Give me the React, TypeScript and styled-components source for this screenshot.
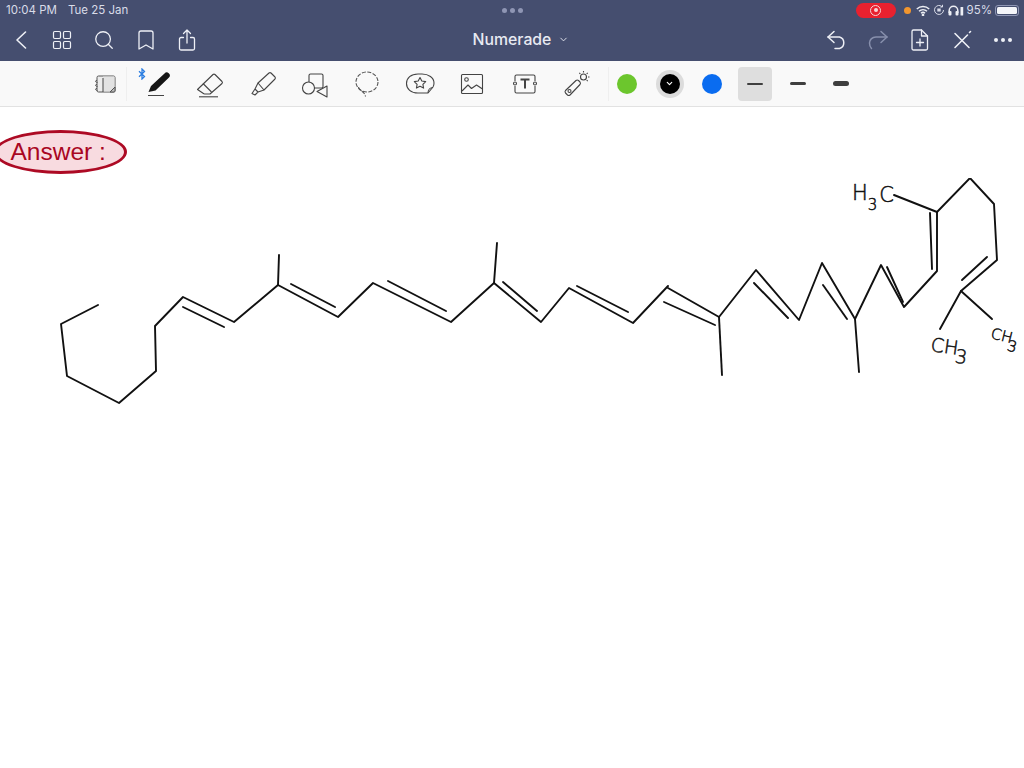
import styled, { createGlobalStyle } from 'styled-components';
import { ChevronDown, Search, Bookmark } from 'lucide-react';

const GlobalStyle = createGlobalStyle`
  html, body {
    margin: 0;
    padding: 0;
    background: #fff;
    font-family: "Inter", "Liberation Sans", sans-serif;
  }
`;

const Page = styled.div`
  width: 1024px;
  height: 768px;
  overflow: hidden;
  display: flex;
  flex-direction: column;
  background: #fff;
`;

const Header = styled.header`
  background: #454e6f;
  color: #eef0f6;
  height: 61px;
  flex: none;
`;

const StatusBar = styled.div`
  height: 20px;
  display: grid;
  grid-template-columns: 1fr auto 1fr;
  align-items: center;
  padding: 0 5px 0 6px;
  font-size: 11.5px;
  color: #d9dce8;
`;

const StatusLeft = styled.div`
  display: flex;
  gap: 11px;
`;

const StatusRight = styled.div`
  display: flex;
  align-items: center;
  justify-content: flex-end;
  gap: 3px;
`;

const Dots = styled.div`
  display: flex;
  gap: 3px;
`;

const Dot = styled.span`
  width: 5px;
  height: 5px;
  border-radius: 50%;
  background: #8f96b4;
`;

const RecordPill = styled.div`
  width: 40px;
  height: 15px;
  margin-right: 5px;
  border-radius: 8px;
  background: #e8212f;
  display: flex;
  align-items: center;
  justify-content: center;
`;

const RecordRing = styled.span`
  width: 11px;
  height: 11px;
  box-sizing: border-box;
  border: 1.5px solid #f6d6d8;
  border-radius: 50%;
  display: flex;
  align-items: center;
  justify-content: center;
  &::after {
    content: '';
    width: 4px;
    height: 4px;
    border-radius: 50%;
    background: #f6d6d8;
  }
`;

const OrangeDot = styled.span`
  width: 7px;
  height: 7px;
  margin-right: 2px;
  border-radius: 50%;
  background: #f2962e;
`;

const Battery = styled.div`
  width: 24px;
  height: 11px;
  box-sizing: border-box;
  border: 1px solid #8f96b4;
  border-radius: 3px;
  padding: 1px;
  display: flex;
`;

const BatteryFill = styled.span`
  flex: 1;
  background: #f4f5f9;
  border-radius: 1.5px;
`;

const NavBar = styled.div`
  height: 40px;
  display: grid;
  grid-template-columns: 1fr auto 1fr;
  align-items: center;
`;

const NavGroup = styled.div<{ $end?: boolean }>`
  display: flex;
  align-items: center;
  justify-content: ${p => (p.$end ? 'flex-end' : 'flex-start')};
`;

const NavButton = styled.span<{ $muted?: boolean }>`
  width: 41.6px;
  height: 30px;
  display: flex;
  align-items: center;
  justify-content: center;
  color: ${p => (p.$muted ? '#8890ad' : '#eef0f6')};
`;

const Title = styled.div`
  display: flex;
  align-items: center;
  gap: 7px;
  font-size: 15.8px;
  font-weight: 500;
  margin: 0 0 2px 18px;
  color: #e8eaf2;
`;

const Toolbar = styled.div`
  height: 46px;
  flex: none;
  box-sizing: border-box;
  background: #f9f9f9;
  border-bottom: 1px solid #e2e2e2;
  display: flex;
  align-items: center;
  padding-left: 84px;
`;

const Tool = styled.span`
  width: 52.4px;
  height: 44px;
  flex: none;
  display: flex;
  align-items: center;
  justify-content: center;
  color: #3c3c3c;
`;

const PagesTool = styled(Tool)`
  width: 42px;
`;

const PenTool = styled(Tool)`
  position: relative;
  width: 57px;
  padding-left: 6px;
  box-sizing: border-box;
`;

const BluetoothMark = styled.svg`
  position: absolute;
  left: 11px;
  top: 6px;
`;

const Separator = styled.span<{ $gap?: number }>`
  width: 1px;
  height: 34px;
  flex: none;
  margin-left: ${p => p.$gap ?? 0}px;
  background: #efefef;
`;

const ToolGroup = styled.div`
  display: flex;
  align-items: center;
`;

const ColorGroup = styled.div`
  display: flex;
  align-items: center;
  margin-left: -3.5px;
`;

const ColorDot = styled.span<{ $color: string }>`
  width: 20px;
  height: 20px;
  border-radius: 50%;
  background: ${p => p.$color};
`;

const ColorSlot = styled.span`
  width: 42.6px;
  height: 44px;
  flex: none;
  display: flex;
  align-items: center;
  justify-content: center;
`;

const ActiveColor = styled.span`
  width: 20px;
  height: 20px;
  border-radius: 50%;
  background: #000;
  box-shadow: 0 0 0 4px #dcdcdc;
  color: #fff;
  display: flex;
  align-items: center;
  justify-content: center;
`;

const LineSlot = styled.span<{ $active?: boolean }>`
  width: 34px;
  height: 34px;
  margin: 0 4.5px;
  flex: none;
  border-radius: 4px;
  background: ${p => (p.$active ? '#dedede' : 'transparent')};
  display: flex;
  align-items: center;
  justify-content: center;
`;

const LineSample = styled.span<{ $weight: number }>`
  width: 16px;
  height: ${p => p.$weight}px;
  border-radius: ${p => p.$weight / 2}px;
  background: #3f3f3f;
`;

const Canvas = styled.main`
  flex: 1;
  background: #fff;
  padding-top: 23px;
`;

const AnswerBadge = styled.div`
  width: 133px;
  height: 44px;
  margin-left: -6px;
  box-sizing: border-box;
  border: 3.5px solid #ad0a24;
  border-radius: 50%;
  background: #f8dbe0;
  color: #a90622;
  font-family: "Liberation Sans", Arial, sans-serif;
  font-size: 24.5px;
  line-height: 38px;
  padding-left: 13.5px;
  white-space: nowrap;
`;

const Molecule = styled.svg`
  display: block;
  margin-top: 4px;
`;

const Hand = styled.text`
  font-family: "DejaVu Sans", sans-serif;
  font-weight: 200;
  fill: #111;
  stroke: #111;
  stroke-width: 0.5px;
`;

const BackIcon = () => (
  <svg width="12" height="18" viewBox="0 0 12 18" fill="none" stroke="currentColor" strokeWidth="1.6" strokeLinecap="round" strokeLinejoin="round">
    <path d="M10.500 1 2 9l8.500 8" />
  </svg>
);

const GridIcon = () => (
  <svg width="20" height="20" viewBox="0 0 20 20" fill="none" stroke="currentColor" strokeWidth="1.2">
    <rect x="1.500" y="1.500" width="7" height="7" rx="1.200" />
    <rect x="11.500" y="1.500" width="7" height="7" rx="1.200" />
    <rect x="1.500" y="11.500" width="7" height="7" rx="1.200" />
    <rect x="11.500" y="11.500" width="7" height="7" rx="1.200" />
  </svg>
);

const ShareIcon = () => (
  <svg width="20" height="24" viewBox="0 0 20 24" fill="none" stroke="currentColor" strokeWidth="1.300" strokeLinecap="round" strokeLinejoin="round">
    <path d="M6.500 9.500H4A1.500 1.500 0 0 0 2.500 11v9.500A1.500 1.500 0 0 0 4 22h12a1.500 1.500 0 0 0 1.500-1.500V11A1.500 1.500 0 0 0 16 9.500h-2.500" />
    <path d="M10 15V2M6.500 5.500 10 2l3.500 3.500" />
  </svg>
);

const UndoIcon = () => (
  <svg width="22" height="20" viewBox="0 0 22 20" fill="none" stroke="currentColor" strokeWidth="1.500" strokeLinecap="round" strokeLinejoin="round">
    <path d="M8 1.500 2 7l6 5.500" />
    <path d="M2 7h11.500a6 6 0 0 1 0 11.500H9" />
  </svg>
);

const RedoIcon = () => (
  <svg width="22" height="20" viewBox="0 0 22 20" fill="none" stroke="currentColor" strokeWidth="1.500" strokeLinecap="round" strokeLinejoin="round">
    <path d="M14 1.500 20 7l-6 5.500" />
    <path d="M20 7H9C5 7 2.500 10 2.500 13s1 4.500 2 5.500" />
  </svg>
);

const NewPageIcon = () => (
  <svg width="20" height="24" viewBox="0 0 20 24" fill="none" stroke="currentColor" strokeWidth="1.300" strokeLinecap="round" strokeLinejoin="round">
    <path d="M3.500 2h8l6 6v12.500a1.500 1.500 0 0 1-1.500 1.500H3.500A1.500 1.500 0 0 1 2 20.500v-17A1.500 1.500 0 0 1 3.500 2Z" />
    <path d="M11.500 2v6h6M10 11v7M6.500 14.500h7" />
  </svg>
);

const CrossToolsIcon = () => (
  <svg width="20" height="20" viewBox="0 0 20 20" fill="none" stroke="currentColor" strokeWidth="1.600" strokeLinecap="round">
    <path d="M3 3.500 17 17.500M15.500 5 3 17.500" />
    <path d="M17.500 2.500 18.500 1.500" />
  </svg>
);

const MoreIcon = () => (
  <svg width="20" height="6" viewBox="0 0 20 6" fill="currentColor">
    <circle cx="3" cy="3" r="2" />
    <circle cx="10" cy="3" r="2" />
    <circle cx="17" cy="3" r="2" />
  </svg>
);

const WifiIcon = () => (
  <svg width="14" height="11" viewBox="0 0 14 11" fill="none" stroke="#eceef4" strokeWidth="1.500">
    <path d="M.8 4a9 9 0 0 1 12.400 0M3 6.200a6 6 0 0 1 8 0M5 8.300a3 3 0 0 1 4 0" />
    <circle cx="7" cy="10" r=".6" fill="#eceef4" />
  </svg>
);

const LockRotationIcon = () => (
  <svg width="12" height="12" viewBox="0 0 12 12" fill="none" stroke="#d9dce8" strokeWidth="1">
    <path d="M10.500 6a4.500 4.500 0 1 1-1.400-3.300" />
    <path d="M9.500 .8v2.200H7.300" />
    <rect x="4.300" y="4.500" width="3.400" height="3" fill="#d9dce8" stroke="none" />
  </svg>
);

const HeadphonesIcon = () => (
  <svg width="16" height="12" viewBox="0 0 16 12" fill="none" stroke="#eceef4" strokeWidth="1.500">
    <path d="M1.200 9V6.500a4.300 4.300 0 0 1 8.600 0V9" />
    <rect x=".5" y="7" width="3" height="4.500" rx="1" fill="#eceef4" stroke="none" />
    <rect x="7.500" y="7" width="3" height="4.500" rx="1" fill="#eceef4" stroke="none" />
    <rect x="12.500" y="3" width="2.700" height="8.500" rx=".6" fill="#eceef4" stroke="none" />
  </svg>
);

const PagesIcon = () => (
  <svg width="24" height="24" viewBox="0 0 24 24" fill="none" stroke="#555" strokeWidth="1">
    <rect x="4" y="4" width="18" height="16" rx="1.500" fill="#ececec" />
    <rect x="10" y="4.500" width="11.500" height="15" fill="#e2e2e2" stroke="none" />
    <path d="M10 6v14" stroke="#444" />
    <path d="M4 8.500c-2-.5-2 2 .5 2M4 12.500c-2-.5-2 2 .5 2M4 16.500c-2-.5-2 2 .5 2" />
    <path d="M22 15l-5 5h4a1 1 0 0 0 1-1Z" fill="#bdbdbd" />
  </svg>
);

const PenIcon = () => (
  <svg width="26" height="26" viewBox="0 0 26 26">
    <path d="M2.500 21 5 15 18.500 2.500a3 3 0 0 1 4.500 4L9.500 19.500 2.500 21Z" fill="#161616" />
    <path d="M2 24.500h16" stroke="#444" strokeWidth="1" />
  </svg>
);

const EraserIcon = () => (
  <svg width="28" height="28" viewBox="0 0 28 28" fill="none" stroke="#444" strokeWidth="1.100" strokeLinejoin="round">
    <path d="M1.500 19.500 17 4.500a1.500 1.500 0 0 1 2 0l7 7a1.500 1.500 0 0 1 0 2L14 24H8.500a1 1 0 0 1-.7-.3L1.500 19.500Z" />
    <path d="M7 13.500 15.500 22" />
    <path d="M3 26.800h19" />
  </svg>
);

const HighlighterIcon = () => (
  <svg width="28" height="28" viewBox="0 0 28 28" fill="none" stroke="#444" strokeWidth="1.100" strokeLinejoin="round">
    <path d="M9 13 20 3a1.500 1.500 0 0 1 2 0l4 4a1.500 1.500 0 0 1 0 2L15 20Z" />
    <path d="M9 13 6 19l3 3 6-2M6 19l-3 4.500 3 1.500 3-3" />
  </svg>
);

const ShapesIcon = () => (
  <svg width="28" height="28" viewBox="0 0 28 28" fill="none" stroke="#444" strokeWidth="1.100" strokeLinejoin="round">
    <rect x="8" y="4" width="14" height="14" rx="1.500" />
    <circle cx="7.500" cy="18" r="6" fill="#f9f9f9" />
    <path d="M26 16v11l-10-5.500Z" fill="#f9f9f9" />
  </svg>
);

const LassoIcon = () => (
  <svg width="26" height="28" viewBox="0 0 26 28" fill="none" stroke="#555" strokeWidth="1.100" strokeDasharray="4 1.500">
    <ellipse cx="13" cy="12" rx="11" ry="10" />
    <path d="M4.500 17c.5 4 6 4 7 9.500" />
  </svg>
);

const StickerIcon = () => (
  <svg width="30" height="24" viewBox="0 0 30 24" fill="none" stroke="#444" strokeWidth="1.100" strokeLinejoin="round">
    <path d="M13 2h4c6.500 0 12 3.500 12 9 0 1.500-.3 3-1 4l-5 6H13C6 21 1.500 17 1.500 11.500S6 2 13 2Z" />
    <path d="M23 21c0-3 2-5.500 5-5.500" />
    <path d="m15 5.500 1.800 3.500 3.900.6-2.800 2.700.7 3.800-3.600-1.800-3.600 1.800.7-3.800-2.800-2.700 3.900-.6Z" />
  </svg>
);

const ImageIcon = () => (
  <svg width="24" height="22" viewBox="0 0 24 22" fill="none" stroke="#444" strokeWidth="1.100" strokeLinejoin="round">
    <rect x="1.500" y="1.500" width="21" height="19" rx="1" />
    <circle cx="6.500" cy="6.500" r="1.800" />
    <path d="m2 18 6-6 3.500 3.500 5-3.500 6 4" />
  </svg>
);

const TextBoxIcon = () => (
  <svg width="26" height="22" viewBox="0 0 26 22" fill="none" stroke="#444" strokeWidth="1.100">
    <path d="M3 8V3.500A1.500 1.500 0 0 1 4.500 2h17A1.500 1.500 0 0 1 23 3.500V8M3 13v5.500A1.500 1.500 0 0 0 4.500 20h17a1.500 1.500 0 0 0 1.500-1.500V13" />
    <circle cx="3" cy="10.500" r="1.500" />
    <circle cx="23" cy="10.500" r="1.500" />
    <path d="M8.500 6.500h9M13 6.500v9" strokeWidth="2" />
  </svg>
);

const LaserIcon = () => (
  <svg width="28" height="28" viewBox="0 0 28 28" fill="none" stroke="#444" strokeWidth="1.100" strokeLinejoin="round">
    <path d="M2.500 20.500 13 10.500a2 2 0 0 1 2.500 0l1.500 1.500a2 2 0 0 1 0 2.500L7 25a2 2 0 0 1-2.500 0L2.500 23a2 2 0 0 1 0-2.500Z" />
    <circle cx="6.500" cy="21" r="1.500" />
    <circle cx="20.500" cy="7" r="3" />
    <path d="M20.500 1v1.500M26.500 7H25M16.300 2.800l1 1M24.700 2.800l-1 1M24.700 11.200l-1-1" />
  </svg>
);

// bonds in page coordinates, read off the reference
const bonds = [
  'M98 305 61 324 67 376 119 403 156 371 155 326 183 297 234 322 278 285 338 317 373 283 451 322 494 283 541 322 569 288 633 323 668 286',
  'M183 307 224 327',
  'M291 284 335 307',
  'M279 255 278 285',
  'M388 281 446 311',
  'M497 243 494 283',
  'M503 282 537 311',
  'M577 286 628 312',
  'M668 288 719 317 756 270 799 320 822 263 855 319 881 265 904 307 937 271 937 212 970 178 994 204 997 260 961 291 940 329',
  'M664 302 715 325',
  'M719 317 722 375',
  'M754 283 788 318',
  'M823 285 847 319',
  'M855 319 859 372',
  'M887 267 903 302',
  'M932 269 930 213',
  'M894 195 937 212',
  'M962 280 987 257',
  'M961 291 992 319',
];

const tools = [EraserIcon, HighlighterIcon, ShapesIcon, LassoIcon, StickerIcon, ImageIcon, TextBoxIcon, LaserIcon];

export default function App() {
  return (
    <Page>
      <GlobalStyle />
      <Header>
        <StatusBar>
          <StatusLeft>
            <span>10:04 PM</span>
            <span>Tue 25 Jan</span>
          </StatusLeft>
          <Dots>
            <Dot />
            <Dot />
            <Dot />
          </Dots>
          <StatusRight>
            <RecordPill>
              <RecordRing />
            </RecordPill>
            <OrangeDot />
            <WifiIcon />
            <LockRotationIcon />
            <HeadphonesIcon />
            <span>95%</span>
            <Battery>
              <BatteryFill />
            </Battery>
          </StatusRight>
        </StatusBar>
        <NavBar>
          <NavGroup>
            <NavButton><BackIcon /></NavButton>
            <NavButton><GridIcon /></NavButton>
            <NavButton><Search size={22} strokeWidth={1.4} /></NavButton>
            <NavButton><Bookmark size={24} strokeWidth={1.3} /></NavButton>
            <NavButton><ShareIcon /></NavButton>
          </NavGroup>
          <Title>
            Numerade
            <ChevronDown size={11} strokeWidth={2} />
          </Title>
          <NavGroup $end>
            <NavButton><UndoIcon /></NavButton>
            <NavButton $muted><RedoIcon /></NavButton>
            <NavButton><NewPageIcon /></NavButton>
            <NavButton><CrossToolsIcon /></NavButton>
            <NavButton><MoreIcon /></NavButton>
          </NavGroup>
        </NavBar>
      </Header>
      <Toolbar>
        <PagesTool><PagesIcon /></PagesTool>
        <Separator />
        <ToolGroup>
          <PenTool>
            <BluetoothMark width="8" height="12" viewBox="0 0 8 12" fill="none" stroke="#2a7de1" strokeWidth="1.300">
              <path d="M1 3.200 6.500 8.500 4 11V1l2.500 2.500L1 8.800" />
            </BluetoothMark>
            <PenIcon />
          </PenTool>
          {tools.map((ToolIcon, i) => (
            <Tool key={i}><ToolIcon /></Tool>
          ))}
        </ToolGroup>
        <Separator $gap={5} />
        <ColorGroup>
          <ColorSlot><ColorDot $color="#6cc62d" /></ColorSlot>
          <ColorSlot>
            <ActiveColor><ChevronDown size={9} strokeWidth={3} /></ActiveColor>
          </ColorSlot>
          <ColorSlot><ColorDot $color="#0a6cf0" /></ColorSlot>
          <LineSlot $active><LineSample $weight={2} /></LineSlot>
          <LineSlot><LineSample $weight={3} /></LineSlot>
          <LineSlot><LineSample $weight={5} /></LineSlot>
        </ColorGroup>
      </Toolbar>
      <Canvas>
        <AnswerBadge>Answer :</AnswerBadge>
        <Molecule width="1024" height="240" viewBox="0 178 1024 240" fill="none" stroke="#111" strokeWidth="1.900" strokeLinejoin="round" strokeLinecap="round">
          {bonds.map(d => (
            <path key={d} d={d} />
          ))}
          <Hand x="852" y="200" fontSize="21">
            H<tspan dy="10" fontSize="15">3</tspan>
            <tspan dx="2" dy="-8" fontSize="21">C</tspan>
          </Hand>
          <Hand x="930" y="351" fontSize="19" transform="rotate(8 930 351)">
            CH<tspan dx="-2" dy="8" fontSize="19">3</tspan>
          </Hand>
          <Hand x="990" y="338" fontSize="15" transform="rotate(14 990 338)">
            CH<tspan dx="-3" dy="8" fontSize="15">3</tspan>
          </Hand>
        </Molecule>
      </Canvas>
    </Page>
  );
}
